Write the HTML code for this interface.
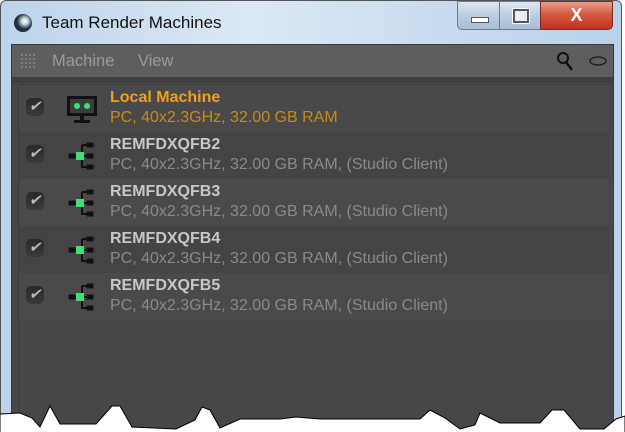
<!DOCTYPE html>
<html><head><style>
html,body{margin:0;width:625px;height:432px;overflow:hidden;background:#fff;font-family:"Liberation Sans",sans-serif;position:relative}
.frame{position:absolute;left:0;top:0;width:622px;height:432px;background:linear-gradient(90deg,#bcd3ea,#dbe8f5 40%,#c9dcef 70%,#b9d1ea);border:1px solid #555;border-radius:6px 6px 0 0;box-sizing:border-box}
.title{position:absolute;left:41px;top:12px;font-size:17px;color:#111}
.logo{position:absolute;left:13px;top:13px;width:18px;height:18px;border-radius:50%;background:radial-gradient(circle at 60% 40%,#fff 0,#cdd 20%,#234 50%,#123 100%)}
.btn{position:absolute;top:0;height:29px;border:1px solid #6b7d93;box-sizing:border-box;background:linear-gradient(#dce7f3,#bccde0 50%,#a9bdd4)}
.panel{position:absolute;left:11px;top:44px;width:603px;height:388px;background:#474747;border:1px solid #3a3a3a;box-sizing:border-box;overflow:hidden}
.menu{position:absolute;left:0;top:0;width:601px;height:32px;background:#5e5e5e;color:#9a9a9a;font-size:16.5px}
.menu span{position:absolute;top:7px}
.list{position:absolute;left:6px;top:39px;width:590px;height:345px;background:#474747;border-left:1px solid #3c3c3c;border-top:1px solid #3c3c3c}
.row{position:absolute;left:0;width:590px;height:47px}
.chk{position:absolute;left:7px;top:13px;width:18px;height:18px;border-radius:5px;background:linear-gradient(#2a2a2a,#3a3a3a);color:#bbb;font-size:15px;line-height:18px;text-align:center;font-style:italic}
.n{position:absolute;left:91px;top:4px;font-size:16px;font-weight:bold;color:#c8c8c8}
.s{position:absolute;left:91px;top:24px;font-size:16px;color:#8a8a8a}
.ic{position:absolute;left:46px;top:9px}
</style></head><body>
<div class="frame">
<div class="logo"></div>
<div class="title">Team Render Machines</div>
<div class="btn" style="left:456px;width:43px;border-radius:0 0 0 5px"><div style="position:absolute;left:13px;top:15px;width:16px;height:4px;background:#fff;border:1px solid #556"></div></div>
<div class="btn" style="left:498px;width:42px"><div style="position:absolute;left:13px;top:7px;width:12px;height:10px;border:2px solid #556;background:#e8eef5;outline:1px solid #fff"></div></div>
<div class="btn" style="left:539px;width:73px;border-radius:0 0 5px 0;background:linear-gradient(#e8a090,#d45a40 45%,#c0321e);border-color:#7a2a20;color:#fff;font-weight:bold;font-size:18px;text-align:center;line-height:26px">X</div>
</div>
<div class="panel">
<div class="menu">
<svg style="position:absolute;left:8px;top:8px" width="16" height="16"><g fill="#888"><circle cx="2" cy="2" r="1"/><circle cx="6" cy="2" r="1"/><circle cx="10" cy="2" r="1"/><circle cx="14" cy="2" r="1"/><circle cx="2" cy="6" r="1"/><circle cx="6" cy="6" r="1"/><circle cx="10" cy="6" r="1"/><circle cx="14" cy="6" r="1"/><circle cx="2" cy="10" r="1"/><circle cx="6" cy="10" r="1"/><circle cx="10" cy="10" r="1"/><circle cx="14" cy="10" r="1"/><circle cx="2" cy="14" r="1"/><circle cx="6" cy="14" r="1"/><circle cx="10" cy="14" r="1"/><circle cx="14" cy="14" r="1"/></g></svg>
<span style="left:40px">Machine</span><span style="left:126px">View</span>
<svg style="position:absolute;left:544px;top:6px" width="20" height="22"><circle cx="7" cy="7" r="5" fill="none" stroke="#111" stroke-width="2"/><line x1="10" y1="11" x2="16" y2="19" stroke="#111" stroke-width="2.5"/></svg>
<svg style="position:absolute;left:576px;top:10px" width="20" height="12"><ellipse cx="10" cy="6" rx="8" ry="4" fill="none" stroke="#222" stroke-width="1.5"/></svg>
</div>
<div style="position:absolute;left:0;top:32px;width:601px;height:6px;background:#3f3f3f"></div>
<div class="list">
<div class="row" style="top:0;background:#494949"><div class="chk">✔</div>
<svg class="ic" width="34" height="30"><rect x="2" y="2" width="30" height="20" fill="#111"/><rect x="5" y="5" width="24" height="14" fill="#3c3c3c"/><circle cx="12" cy="12" r="3" fill="#3fe07a"/><circle cx="22" cy="12" r="3" fill="#3fe07a"/><rect x="15" y="22" width="4" height="4" fill="#111"/><rect x="9" y="26" width="16" height="3" fill="#111"/></svg>
<div class="n" style="color:#f0a020">Local Machine</div><div class="s" style="color:#c88a1a">PC, 40x2.3GHz, 32.00 GB RAM</div></div>
<script>
var c=['#444444','#4a4a4a','#444444','#4a4a4a'];
for(var i=0;i<4;i++){document.write('<div class="row" style="top:'+(47+i*47)+'px;background:'+c[i]+'"><div class="chk">✔</div><svg class="ic" width="34" height="30"><g fill="#111" stroke="#111"><rect x="22" y="2" width="6" height="4"/><rect x="22" y="13" width="6" height="4"/><rect x="22" y="24" width="6" height="4"/><rect x="4" y="13" width="6" height="4"/><path d="M17 4H22M17 4V26H22M10 15H22" fill="none" stroke-width="2"/></g><rect x="11" y="11" width="8" height="8" fill="#3fe07a"/></svg><div class="n">REMFDXQFB'+(i+2)+'</div><div class="s">PC, 40x2.3GHz, 32.00 GB RAM, (Studio Client)</div></div>');}
</script>
</div>
</div>
<svg style="position:absolute;left:0;top:0" width="625" height="432"><path d="M0 414 L20 413 L32 418 L40 427 L50 406 L60 424 L96 424 L104 415 L112 406 L120 406 L132 427 L176 429 L195 420 L202 407 L210 410 L220 428 L240 419 L280 419 L296 417 L320 419 L420 419 L430 410 L445 418 L460 429 L475 425 L480 413 L500 423 L540 423 L552 410 L564 410 L580 429 L604 429 L616 419 L625 416 L625 433 L0 433Z" fill="#fff" stroke="#000" stroke-width="1"/></svg>
</body></html>
